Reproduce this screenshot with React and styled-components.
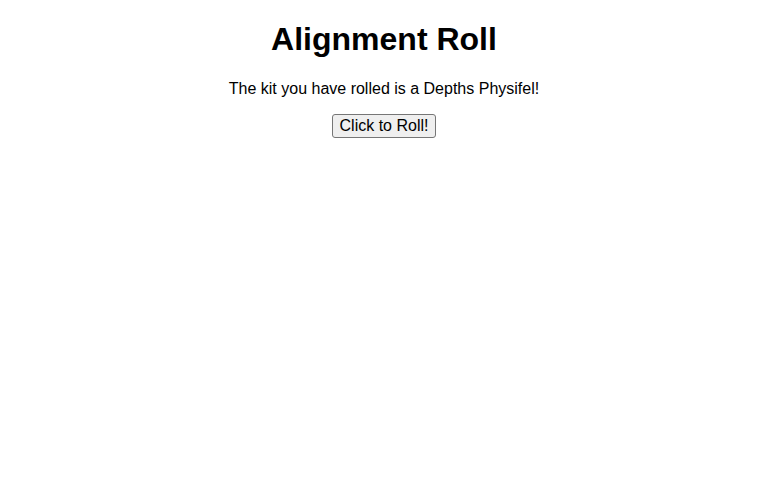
import React, { useState } from 'react';
import styled, { createGlobalStyle } from 'styled-components';

const GlobalStyle = createGlobalStyle`
  body {
    margin: 0;
    font-family: "Liberation Sans", Arial, sans-serif;
    background: #fff;
    color: #000;
  }
`;

const Page = styled.div`
  text-align: center;
`;

const Title = styled.h1`
  font-size: 32px;
  font-weight: bold;
  margin: 21.44px 0;
`;

const Result = styled.p`
  font-size: 16px;
  margin: 16px 0;
`;

const RollButton = styled.button`
  font-family: "Liberation Sans", Arial, sans-serif;
  font-size: 16px;
  padding: 2px 7px;
  background: #efefef;
  color: #000;
  border: 1px solid #767676;
  border-radius: 3px;
  cursor: pointer;
  &:hover {
    background: #e5e5e5;
  }
`;

const kits = ['Depths Physifel', 'Summit Warden', 'Ember Scout', 'Tide Mystic'];

const App = () => {
    const [kit, setKit] = useState(kits[0]);
    const roll = () => setKit(kits[Math.floor(Math.random() * kits.length)]);
    return (
        <Page>
            <GlobalStyle />
            <Title>Alignment Roll</Title>
            <Result>The kit you have rolled is a {kit}!</Result>
            <RollButton onClick={roll}>Click to Roll!</RollButton>
        </Page>
    );
};

export default App;
